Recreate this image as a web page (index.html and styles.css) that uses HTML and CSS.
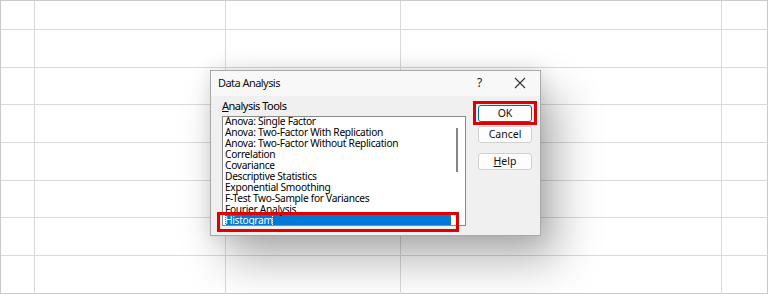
FILE: index.html
```html
<!DOCTYPE html>
<html>
<head>
<meta charset="utf-8">
<link rel="stylesheet" href="styles.css">
</head>
<body>
<div class="sheet">
  <div class="grid">
    <div></div><div></div><div></div><div></div><div></div>
    <div></div><div></div><div></div><div></div><div></div>
    <div></div><div></div><div></div><div></div><div></div>
    <div></div><div></div><div></div><div></div><div></div>
    <div></div><div></div><div></div><div></div><div></div>
    <div></div><div></div><div></div><div></div><div></div>
    <div></div><div></div><div></div><div></div><div></div>
    <div></div><div></div><div></div><div></div><div></div>
  </div>
  <div class="dialog">
    <div class="titlebar">
      <span class="title">Data Analysis</span>
      <span class="help-q">?</span>
      <svg class="close" width="12" height="12" viewBox="0 0 12 12"><path d="M1 1L11 11M11 1L1 11" stroke="#333" stroke-width="1.1" fill="none"/></svg>
    </div>
    <div class="body">
      <div class="left">
        <div class="label"><u>A</u>nalysis Tools</div>
        <div class="listbox">
          <div class="items">
            <div class="item">Anova: Single Factor</div>
            <div class="item">Anova: Two-Factor With Replication</div>
            <div class="item">Anova: Two-Factor Without Replication</div>
            <div class="item">Correlation</div>
            <div class="item">Covariance</div>
            <div class="item">Descriptive Statistics</div>
            <div class="item">Exponential Smoothing</div>
            <div class="item">F-Test Two-Sample for Variances</div>
            <div class="item">Fourier Analysis</div>
            <div class="item selected"><span class="focus">Histogram</span></div>
          </div>
          <div class="scrollbar"><div class="thumb"></div></div>
        </div>
      </div>
      <div class="buttons">
        <div class="btn ok">OK</div>
        <div class="btn">Cancel</div>
        <div class="btn help"><u>H</u>elp</div>
      </div>
    </div>
    <div class="hl hl-ok"></div>
    <div class="hl hl-hist"></div>
  </div>
</div>
</body>
</html>
```
FILE: styles.css
```css
html, body {
  margin: 0;
  padding: 0;
  background: #fff;
}
body {
  font-family: "Noto Sans", "Open Sans", sans-serif;
}
.sheet {
  position: relative;
  width: 768px;
  height: 294px;
  overflow: hidden;
  background: #fff;
}
.grid {
  display: grid;
  grid-template-columns: 34px 191px 175px 321px 47px;
  grid-template-rows: 29px 38px 37px 38px 38px 37px 38px 39px;
  width: 768px;
  height: 294px;
  box-sizing: border-box;
  border: 1px solid #c9c9c9;
}
.grid > div {
  border-right: 1px solid #dadada;
  border-bottom: 1px solid #dadada;
}
.grid > div:nth-child(5n) {
  border-right: none;
}
.grid > div:nth-last-child(-n+5) {
  border-bottom: none;
}
.dialog {
  position: absolute;
  left: 210px;
  top: 70px;
  width: 331px;
  height: 166px;
  box-sizing: border-box;
  background: #f0f0f0;
  border: 1px solid #a9a9a9;
  box-shadow: 16px 24px 42px rgba(0,0,0,0.3), 0 0 18px rgba(0,0,0,0.12);
  color: #000;
}
.titlebar {
  height: 25px;
  background: #f8f8f8;
  display: flex;
  align-items: center;
  padding: 0 0 0 7px;
}
.title {
  font-size: 11px;
  letter-spacing: -0.55px;
  flex: 1;
  color: #111;
  margin-top: -2px;
}
.help-q {
  font-size: 12px;
  color: #222;
  width: 12px;
  margin-right: 25px;
  margin-top: -2px;
}
.close {
  margin-right: 14px;
  margin-top: -2px;
}
.body {
  display: flex;
  padding: 2px 0 0 11px;
}
.left {
  width: 245px;
}
.label {
  font-size: 11px;
  letter-spacing: -0.5px;
  height: 18px;
  line-height: 16px;
}
.listbox {
  width: 244px;
  height: 110px;
  box-sizing: border-box;
  border: 1px solid #8a8a8a;
  background: #fff;
  display: flex;
  overflow: hidden;
}
.items {
  flex: 1;
  padding: 0 0 0 2px;
  margin-top: -1px;
}
.item {
  font-size: 10.2px;
  letter-spacing: -0.3px;
  line-height: 11px;
  height: 11px;
  white-space: nowrap;
}
.item.selected {
  background: #0078d7;
  color: #fff;
  height: 12px;
  line-height: 11px;
}
.focus {
  outline: 1px dotted #fff;
  outline-offset: -1px;
}
.scrollbar {
  width: 14px;
  position: relative;
}
.thumb {
  position: absolute;
  left: 5px;
  top: 11px;
  width: 2px;
  height: 44px;
  background: #858585;
}
.buttons {
  display: flex;
  flex-direction: column;
  gap: 4px;
  margin-left: 11px;
  padding-top: 7px;
}
.btn {
  width: 54px;
  height: 17px;
  box-sizing: border-box;
  background: #fdfdfd;
  border: 1px solid #d0d0d0;
  border-radius: 3px;
  font-size: 10.5px;
  line-height: 15px;
  text-align: center;
  color: #111;
}
.btn.ok {
  border: 1px solid #0067c0;
}
.btn.help {
  margin-top: 6px;
}
.hl {
  position: absolute;
  border: 3px solid #e00000;
  box-sizing: border-box;
}
.hl-ok {
  left: 262px;
  top: 30px;
  width: 64px;
  height: 24px;
}
.hl-hist {
  left: 6px;
  top: 141px;
  width: 242px;
  height: 20px;
}
```
